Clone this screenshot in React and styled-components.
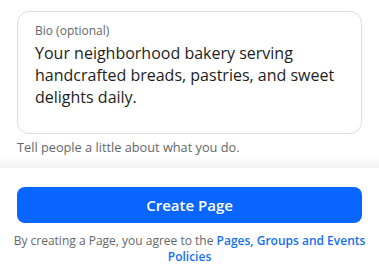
import React from "react";
import styled, { createGlobalStyle } from "styled-components";

const GlobalStyle = createGlobalStyle`
  html, body {
    margin: 0;
    padding: 0;
    background: #ffffff;
    font-family: "Open Sans", "Noto Sans", Arial, sans-serif;
    -webkit-font-smoothing: antialiased;
  }
`;

const Screen = styled.div`
  width: 379px;
  height: 270px;
  display: flex;
  flex-direction: column;
  overflow: hidden;
`;

const FormArea = styled.div`
  padding: 11px 17px 0 17px;
  flex: 1;
`;

const Field = styled.div`
  box-sizing: border-box;
  height: 123px;
  border: 1px solid #dadde1;
  border-radius: 12px;
  padding: 10px 17px;
  display: flex;
  flex-direction: column;
  gap: 3px;
`;

const FieldLabel = styled.label`
  font-size: 12px;
  line-height: 17px;
  color: #65676b;
`;

const FieldValue = styled.div`
  font-size: 16px;
  line-height: 22px;
  color: #1c1e21;
`;

const Helper = styled.p`
  margin: 5px 0 0 0;
  font-size: 12.75px;
  line-height: 17px;
  color: #65676b;
`;

const Footer = styled.div`
  position: relative;
  padding: 19px 17px 0 17px;
  height: 102px;
  box-sizing: border-box;
  &::before {
    content: "";
    position: absolute;
    left: 0;
    right: 0;
    top: -11px;
    height: 11px;
    background: linear-gradient(to bottom, rgba(0, 0, 0, 0), rgba(0, 0, 0, 0.05));
  }
`;

const PrimaryButton = styled.button`
  width: 100%;
  height: 36px;
  border: none;
  border-radius: 8px;
  background: #0866ff;
  color: #ffffff;
  font-family: inherit;
  font-size: 15px;
  font-weight: 600;
  cursor: pointer;
`;

const Terms = styled.p`
  margin: 10px -8px 0 -8px;
  text-align: center;
  font-size: 12px;
  line-height: 16px;
  color: #65676b;
`;

const TermsLink = styled.a`
  color: #1470ef;
  font-weight: 600;
  text-decoration: none;
`;

export default function App() {
  return (
    <>
      <GlobalStyle />
      <Screen>
        <FormArea>
          <Field>
            <FieldLabel>Bio (optional)</FieldLabel>
            <FieldValue>
              Your neighborhood bakery serving handcrafted breads, pastries, and sweet delights daily.
            </FieldValue>
          </Field>
          <Helper>Tell people a little about what you do.</Helper>
        </FormArea>
        <Footer>
          <PrimaryButton>Create Page</PrimaryButton>
          <Terms>
            By creating a Page, you agree to the <TermsLink href="#">Pages, Groups and Events Policies</TermsLink>
          </Terms>
        </Footer>
      </Screen>
    </>
  );
}
